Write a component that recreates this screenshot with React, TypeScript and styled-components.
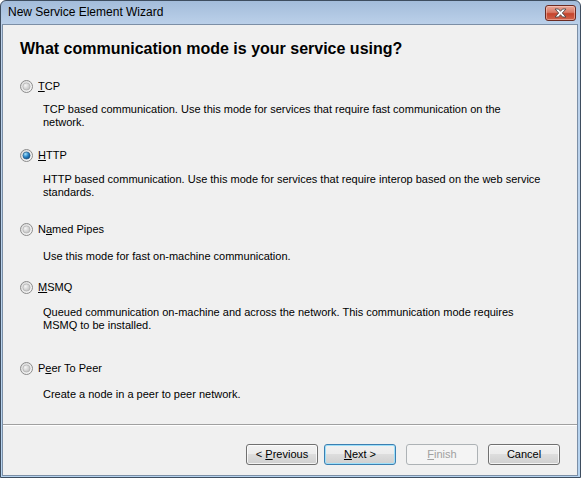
import React from "react";
import styled, { createGlobalStyle } from "styled-components";

const GlobalStyle = createGlobalStyle`
  html, body {
    margin: 0;
    padding: 0;
    background: #ffffff;
  }
  body {
    font-family: "Liberation Sans", Arial, sans-serif;
    font-size: 11px;
    color: #000000;
  }
`;

const Window = styled.div`
  box-sizing: border-box;
  width: 581px;
  height: 478px;
  display: flex;
  flex-direction: column;
  border: 1px solid #3e4d5f;
  border-radius: 6px 6px 0 0;
  background: linear-gradient(180deg, #a3bcda 0px, #bcd1ea 24px, #b6d3ef 100%);
  overflow: hidden;
`;

const TitleBar = styled.div`
  height: 23px;
  flex: none;
  display: flex;
  align-items: flex-start;
  justify-content: space-between;
  padding-left: 7px;
`;

const Title = styled.span`
  font-family: "Liberation Sans", Arial, sans-serif;
  font-size: 12px;
  line-height: 23px;
  color: #000000;
`;

const CloseButton = styled.div`
  box-sizing: border-box;
  width: 31px;
  height: 16px;
  margin: 4px 4px 0 0;
  border: 1px solid #6b2b22;
  border-radius: 3px;
  background: linear-gradient(180deg, #e9a899 0%, #d97a66 45%, #c5442c 55%, #d0644c 100%);
  box-shadow: inset 0 0 0 1px rgba(255, 220, 210, 0.45);
  display: flex;
  align-items: center;
  justify-content: center;
`;

const Client = styled.div`
  flex: 1;
  display: flex;
  flex-direction: column;
  margin: 0 2px 1px 1px;
  border: 1px solid #7c8fa6;
  background: #f0f0f0;
`;

const Content = styled.div`
  flex: 1;
  padding: 14px 0 0 17px;
`;

const Heading = styled.h1`
  margin: 0;
  font-family: "Liberation Sans", Arial, sans-serif;
  font-size: 16px;
  font-weight: bold;
  line-height: 20px;
  color: #000000;
`;

const Options = styled.div`
  display: flex;
  flex-direction: column;
  padding-top: 19px;
`;

const Option = styled.div<{ $gap: number }>`
  margin-top: ${(p) => p.$gap}px;
`;

const RadioRow = styled.label`
  display: flex;
  align-items: center;
  gap: 5px;
  height: 16px;
  line-height: 16px;
  white-space: nowrap;
`;

const Description = styled.div<{ $gap: number }>`
  margin: ${(p) => p.$gap}px 0 0 23px;
  line-height: 13px;
  white-space: nowrap;
`;

const Footer = styled.div`
  flex: none;
  display: flex;
  justify-content: flex-end;
  padding: 19px 17px 10px 0;
  border-top: 1px solid #a0a0a0;
  box-shadow: inset 0 1px 0 #ffffff;
`;

const Button = styled.button<{ $kind?: "normal" | "default" | "disabled"; $space: number }>`
  box-sizing: border-box;
  width: 72px;
  height: 21px;
  margin-left: ${(p) => p.$space}px;
  padding: 0;
  border-radius: 3px;
  font-family: "Liberation Sans", Arial, sans-serif;
  font-size: 11px;
  line-height: 19px;
  border: 1px solid
    ${(p) => (p.$kind === "default" ? "#3c7fb1" : p.$kind === "disabled" ? "#adb2b5" : "#707070")};
  color: ${(p) => (p.$kind === "disabled" ? "#a0a0a0" : "#000000")};
  background: ${(p) =>
    p.$kind === "disabled"
      ? "#f4f4f4"
      : "linear-gradient(180deg, #f2f2f2 0%, #ebebeb 50%, #dddddd 50%, #cfcfcf 100%)"};
  box-shadow: ${(p) =>
    p.$kind === "default"
      ? "inset 0 0 0 1px #9ee0fa"
      : p.$kind === "disabled"
      ? "none"
      : "inset 0 0 0 1px rgba(255, 255, 255, 0.75)"};
`;

const RadioIcon = ({ checked }: { checked: boolean }) => (
  <svg width="13" height="13" viewBox="0 0 13 13">
    <defs>
      <linearGradient id="rbOuter" x1="0" y1="0" x2="1" y2="1">
        <stop offset="0" stopColor="#d8d8d8" />
        <stop offset="1" stopColor="#fbfbfb" />
      </linearGradient>
      <radialGradient id="rbOff" cx="0.35" cy="0.35" r="0.8">
        <stop offset="0" stopColor="#f4f4f4" />
        <stop offset="1" stopColor="#b9b9b9" />
      </radialGradient>
      <radialGradient id="rbOn" cx="0.35" cy="0.3" r="0.8">
        <stop offset="0" stopColor="#a9e4fb" />
        <stop offset="0.5" stopColor="#2a86c8" />
        <stop offset="1" stopColor="#0f4478" />
      </radialGradient>
    </defs>
    <circle cx="6.5" cy="6.5" r="6" fill="url(#rbOuter)" stroke="#8b8b8b" strokeWidth="1" />
    <circle cx="6.5" cy="6.5" r="3.6" fill={checked ? "url(#rbOn)" : "url(#rbOff)"} stroke={checked ? "#24527c" : "#a8a8a8"} strokeWidth="0.6" />
  </svg>
);

const CloseGlyph = () => (
  <svg width="13" height="10" viewBox="0 0 13 10">
    <path
      d="M1 1 H4.5 L6.5 3.3 L8.5 1 H12 L8.3 5 L12 9 H8.5 L6.5 6.7 L4.5 9 H1 L4.7 5 Z"
      fill="#ffffff"
      stroke="#4a4a4a"
      strokeWidth="0.9"
      strokeLinejoin="round"
    />
  </svg>
);

type Mode = {
  key: string;
  mnemonic: number;
  label: string;
  lines: string[];
  gap: number;
  descGap: number;
  checked?: boolean;
};

const modes: Mode[] = [
  {
    key: "tcp",
    label: "TCP",
    mnemonic: 0,
    lines: [
      "TCP based communication. Use this mode for services that require fast communication on the",
      "network.",
    ],
    gap: 0,
    descGap: 9,
  },
  {
    key: "http",
    label: "HTTP",
    mnemonic: 0,
    lines: [
      "HTTP based communication. Use this mode for services that require interop based on the web service",
      "standards.",
    ],
    gap: 18,
    descGap: 10,
    checked: true,
  },
  {
    key: "pipes",
    label: "Named Pipes",
    mnemonic: 1,
    lines: ["Use this mode for fast on-machine communication."],
    gap: 22,
    descGap: 13,
  },
  {
    key: "msmq",
    label: "MSMQ",
    mnemonic: 0,
    lines: [
      "Queued communication on-machine and across the network. This communication mode requires",
      "MSMQ to be installed.",
    ],
    gap: 16,
    descGap: 11,
  },
  {
    key: "p2p",
    label: "Peer To Peer",
    mnemonic: 1,
    lines: ["Create a node in a peer to peer network."],
    gap: 28,
    descGap: 12,
  },
];

const Mnemonic = ({ text, at }: { text: string; at: number }) => (
  <span>
    {text.slice(0, at)}
    <u>{text.charAt(at)}</u>
    {text.slice(at + 1)}
  </span>
);

export default function App() {
  return (
    <>
      <GlobalStyle />
      <Window>
        <TitleBar>
          <Title>New Service Element Wizard</Title>
          <CloseButton>
            <CloseGlyph />
          </CloseButton>
        </TitleBar>
        <Client>
          <Content>
            <Heading>What communication mode is your service using?</Heading>
            <Options>
              {modes.map((m) => (
                <Option key={m.key} $gap={m.gap}>
                  <RadioRow>
                    <RadioIcon checked={!!m.checked} />
                    <Mnemonic text={m.label} at={m.mnemonic} />
                  </RadioRow>
                  <Description $gap={m.descGap}>
                    {m.lines.map((line, i) => (
                      <div key={i}>{line}</div>
                    ))}
                  </Description>
                </Option>
              ))}
            </Options>
          </Content>
          <Footer>
            <Button $space={0}>
              &lt; <u>P</u>revious
            </Button>
            <Button $kind="default" $space={6}>
              <u>N</u>ext &gt;
            </Button>
            <Button $kind="disabled" $space={10}>
              <u>F</u>inish
            </Button>
            <Button $space={10}>Cancel</Button>
          </Footer>
        </Client>
      </Window>
    </>
  );
}
